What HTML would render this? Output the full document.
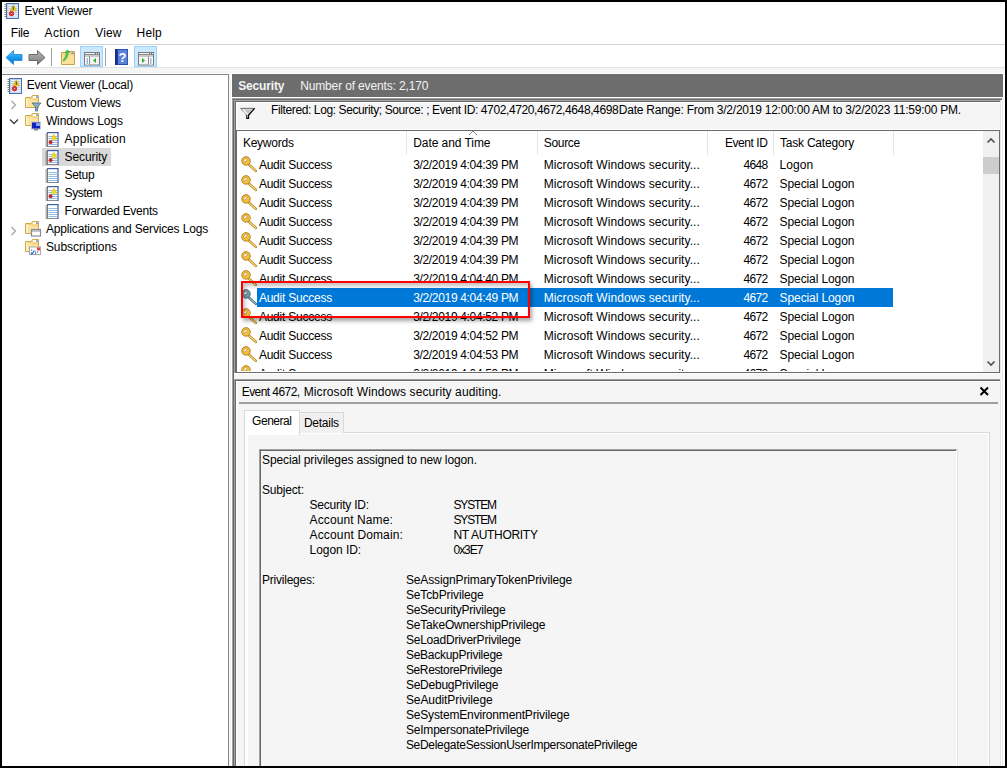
<!DOCTYPE html>
<html><head><meta charset="utf-8"><style>
html,body{margin:0;padding:0}
body{width:1007px;height:768px;overflow:hidden;position:relative;background:#fff;font-family:"Liberation Sans",sans-serif}
.a{position:absolute}
.t{position:absolute;font:12px/15px "Liberation Sans",sans-serif;white-space:pre;color:#000}
svg{position:absolute;overflow:visible}
</style></head><body>
<!-- menu / toolbar separators -->
<div class=a style="left:2px;top:44px;width:1003px;height:1px;background:#d4d4d4"></div>
<div class=a style="left:2px;top:67px;width:1003px;height:1px;background:#e1e4e1"></div>
<div class=a style="left:3px;top:68px;width:1002px;height:5px;background:#f5f5f5"></div>

<!-- toolbar buttons (hot) -->
<div class=a style="left:80px;top:46px;width:21px;height:19px;background:#cce8ff;border:1px solid #99d1ff"></div>
<div class=a style="left:134px;top:46px;width:21px;height:19px;background:#cce8ff;border:1px solid #99d1ff"></div>
<div class=a style="left:51px;top:48px;width:1px;height:18px;background:#a0a0a0"></div>
<div class=a style="left:105px;top:48px;width:1px;height:18px;background:#a0a0a0"></div>

<!-- tree pane -->
<div class=a style="left:2px;top:74px;width:226px;height:692px;border-top:1px solid #828790;border-right:1px solid #828790;background:#fff"></div>
<div class=a style="left:42px;top:148px;width:69px;height:18px;background:#d9d9d9"></div>

<!-- right bg areas -->
<div class=a style="left:229px;top:74px;width:2px;height:692px;background:#f5f5f5"></div>

<!-- header bar -->
<div class=a style="left:232px;top:74px;width:771px;height:23px;background:#6d6d6d"></div>

<!-- outer container sunken border -->
<div class=a style="left:232px;top:98px;width:771px;height:668px;background:#f5f5f5"></div>
<div class=a style="left:232px;top:98px;width:771px;height:1px;background:#a0a0a0"></div>
<div class=a style="left:232px;top:98px;width:1px;height:668px;background:#a0a0a0"></div>
<div class=a style="left:233px;top:99px;width:769px;height:1px;background:#696969"></div>
<div class=a style="left:233px;top:99px;width:1px;height:667px;background:#696969"></div>
<div class=a style="left:1002px;top:98px;width:1px;height:668px;background:#e9e9e9"></div>
<div class=a style="left:1003px;top:98px;width:2px;height:668px;background:#fff"></div>

<!-- upper panel -->
<div class=a style="left:234px;top:100px;width:767px;height:1px;background:#a8a8a8"></div>
<div class=a style="left:234px;top:100px;width:1px;height:273px;background:#a0a0a0"></div>
<div class=a style="left:235px;top:101px;width:765px;height:1px;background:#696969"></div>
<div class=a style="left:235px;top:101px;width:1px;height:272px;background:#696969"></div>
<div class=a style="left:1000px;top:100px;width:1px;height:273px;background:#e6e6e6"></div>
<div class=a style="left:1001px;top:100px;width:1px;height:273px;background:#fff"></div>
<!-- filter area -->
<div class=a style="left:236px;top:102px;width:764px;height:28px;background:#f5f5f5;border-top:1px solid #fff;border-left:1px solid #fff;box-sizing:border-box"></div>
<div class=a style="left:236px;top:129px;width:764px;height:1px;background:#fff"></div>
<!-- list control -->
<div class=a style="left:236px;top:130px;width:762px;height:241px;background:#fff;border:1px solid #6b6b6b"></div>
<!-- column dividers -->
<div class=a style="left:406px;top:131px;width:1px;height:24px;background:#e5e5e5"></div>
<div class=a style="left:537px;top:131px;width:1px;height:24px;background:#e5e5e5"></div>
<div class=a style="left:707px;top:131px;width:1px;height:24px;background:#e5e5e5"></div>
<div class=a style="left:773px;top:131px;width:1px;height:24px;background:#e5e5e5"></div>
<div class=a style="left:893px;top:131px;width:1px;height:24px;background:#e5e5e5"></div>
<!-- scrollbar -->
<div class=a style="left:983px;top:131px;width:16px;height:241px;background:#f0f0f0"></div>
<div class=a style="left:983px;top:157px;width:16px;height:17px;background:#cdcdcd"></div>
<!-- selected row -->
<div class=a style="left:257px;top:288px;width:636px;height:19px;background:#0078d7"></div>

<!-- splitter -->
<div class=a style="left:234px;top:373px;width:767px;height:6px;background:#f5f5f5"></div>
<div class=a style="left:234px;top:373px;width:767px;height:1px;background:#fff"></div>

<!-- lower panel -->
<div class=a style="left:234px;top:379px;width:767px;height:1px;background:#a0a0a0"></div>
<div class=a style="left:234px;top:379px;width:1px;height:387px;background:#a0a0a0"></div>
<div class=a style="left:235px;top:380px;width:765px;height:1px;background:#696969"></div>
<div class=a style="left:235px;top:380px;width:1px;height:386px;background:#696969"></div>
<div class=a style="left:236px;top:381px;width:764px;height:1px;background:#fff"></div>
<div class=a style="left:236px;top:381px;width:1px;height:385px;background:#fff"></div>
<div class=a style="left:1000px;top:379px;width:1px;height:387px;background:#e6e6e6"></div>
<div class=a style="left:1001px;top:379px;width:1px;height:387px;background:#fff"></div>
<!-- title separator -->
<div class=a style="left:239px;top:402px;width:759px;height:2px;background:#a0a0a0"></div>

<!-- tab page -->
<div class=a style="left:244px;top:432px;width:744px;height:340px;border:1px solid #d9d9d9;background:#fff"></div>
<div class=a style="left:248px;top:434px;width:740px;height:340px;background:#f5f5f5"></div>
<!-- tabs -->
<div class=a style="left:299px;top:412px;width:43px;height:20px;border:1px solid #d9d9d9;border-bottom:none;background:#f0f0f0"></div>
<div class=a style="left:244px;top:410px;width:54px;height:24px;border:1px solid #d9d9d9;border-bottom:none;background:#fff"></div>
<!-- text box -->
<div class=a style="left:259px;top:449px;width:698px;height:320px;background:#f5f5f5"></div>
<div class=a style="left:259px;top:449px;width:698px;height:1px;background:#a0a0a0"></div>
<div class=a style="left:259px;top:449px;width:1px;height:320px;background:#a0a0a0"></div>
<div class=a style="left:260px;top:450px;width:696px;height:1px;background:#696969"></div>
<div class=a style="left:260px;top:450px;width:1px;height:320px;background:#696969"></div>
<div class=a style="left:956px;top:450px;width:1px;height:320px;background:#fff"></div>
<div class=a style="left:957px;top:449px;width:1px;height:320px;background:#e3e3e3"></div>

<svg style="left:4px;top:3px" width="16" height="16" viewBox="0 0 16 16">
<rect x="2.5" y="0.5" width="12" height="15" fill="#bcd3ee" stroke="#4c6cb0"/>
<g stroke="#e8f2fc" stroke-width="1"><line x1="4" y1="2.5" x2="14" y2="2.5"/><line x1="4" y1="4.5" x2="14" y2="4.5"/><line x1="4" y1="6.5" x2="14" y2="6.5"/><line x1="4" y1="8.5" x2="14" y2="8.5"/><line x1="4" y1="10.5" x2="14" y2="10.5"/><line x1="4" y1="12.5" x2="14" y2="12.5"/><line x1="4" y1="14" x2="14" y2="14"/></g>
<g stroke="#707070" stroke-width="0.9"><line x1="0.5" y1="1.5" x2="3" y2="1.5"/><line x1="0.5" y1="3.5" x2="3" y2="3.5"/><line x1="0.5" y1="5.5" x2="3" y2="5.5"/><line x1="0.5" y1="7.5" x2="3" y2="7.5"/><line x1="0.5" y1="9.5" x2="3" y2="9.5"/><line x1="0.5" y1="11.5" x2="3" y2="11.5"/><line x1="0.5" y1="13.5" x2="3" y2="13.5"/></g>
<path d="M9.3 1.8 L12.6 7.8 L6 7.8 Z" fill="#f2d21a" stroke="#c9a400" stroke-width="0.6"/>
<line x1="9.3" y1="3.8" x2="9.3" y2="6.8" stroke="#222" stroke-width="0.9"/>
<circle cx="7.5" cy="10.6" r="2.6" fill="#d42a2a"/>
<path d="M6.8 9.9 L8.2 11.3 M8.2 9.9 L6.8 11.3" stroke="#fff" stroke-width="0.6"/>
</svg>
<svg style="left:7px;top:78px" width="16" height="16" viewBox="0 0 16 16">
<rect x="2.5" y="0.5" width="12" height="15" fill="#bcd3ee" stroke="#4c6cb0"/>
<g stroke="#e8f2fc" stroke-width="1"><line x1="4" y1="2.5" x2="14" y2="2.5"/><line x1="4" y1="4.5" x2="14" y2="4.5"/><line x1="4" y1="6.5" x2="14" y2="6.5"/><line x1="4" y1="8.5" x2="14" y2="8.5"/><line x1="4" y1="10.5" x2="14" y2="10.5"/><line x1="4" y1="12.5" x2="14" y2="12.5"/><line x1="4" y1="14" x2="14" y2="14"/></g>
<g stroke="#707070" stroke-width="0.9"><line x1="0.5" y1="1.5" x2="3" y2="1.5"/><line x1="0.5" y1="3.5" x2="3" y2="3.5"/><line x1="0.5" y1="5.5" x2="3" y2="5.5"/><line x1="0.5" y1="7.5" x2="3" y2="7.5"/><line x1="0.5" y1="9.5" x2="3" y2="9.5"/><line x1="0.5" y1="11.5" x2="3" y2="11.5"/><line x1="0.5" y1="13.5" x2="3" y2="13.5"/></g>
<path d="M9.3 1.8 L12.6 7.8 L6 7.8 Z" fill="#f2d21a" stroke="#c9a400" stroke-width="0.6"/>
<line x1="9.3" y1="3.8" x2="9.3" y2="6.8" stroke="#222" stroke-width="0.9"/>
<circle cx="7.5" cy="10.6" r="2.6" fill="#d42a2a"/>
<path d="M6.8 9.9 L8.2 11.3 M8.2 9.9 L6.8 11.3" stroke="#fff" stroke-width="0.6"/>
</svg>
<svg style="left:5px;top:49px" width="18" height="17" viewBox="0 0 18 17">
<defs><linearGradient id="gb" x1="0" y1="0" x2="0" y2="1"><stop offset="0" stop-color="#6cc8ff"/><stop offset="0.5" stop-color="#1a9af0"/><stop offset="1" stop-color="#0a6cc8"/></linearGradient></defs>
<path d="M1 8.5 L8.5 1.5 V5.5 H17 V11.5 H8.5 V15.5 Z" fill="url(#gb)" stroke="#2a88d8" stroke-width="0.9"/></svg>
<svg style="left:28px;top:49px" width="18" height="17" viewBox="0 0 18 17">
<defs><linearGradient id="gg" x1="0" y1="0" x2="0" y2="1"><stop offset="0" stop-color="#b8b8b8"/><stop offset="1" stop-color="#7a7a7a"/></linearGradient></defs>
<path d="M17 8.5 L9.5 1.5 V5.5 H1 V11.5 H9.5 V15.5 Z" fill="url(#gg)" stroke="#606060" stroke-width="0.9"/></svg>
<svg style="left:60px;top:49px" width="17" height="17" viewBox="0 0 17 17">
<path d="M1.5 3.5 H6 L7 2.5 H14.5 V15.5 H1.5 Z" fill="#f4d88a" stroke="#c9a24e"/>
<rect x="2" y="6.5" width="12" height="8.5" fill="#fbe29a"/>
<ellipse cx="12.5" cy="4.2" rx="1.4" ry="0.8" fill="#3a8ae0"/>
<path d="M3 11.5 C5 9 6 7 6.5 3 L5 3.5 L7.5 0.8 L9.5 3.8 L8 3.5 C8 7 7 9.5 4 12 Z" fill="#4cd24c" stroke="#2aa02a" stroke-width="0.6"/>
</svg>
<svg style="left:84px;top:52px" width="17" height="14" viewBox="0 0 17 14">
<rect x="0.5" y="0.5" width="15" height="12.5" fill="#f4f4f4" stroke="#7c7c7c"/>
<line x1="1" y1="2.5" x2="15" y2="2.5" stroke="#8a8a8a"/><rect x="11" y="1" width="1" height="1" fill="#666"/><rect x="13" y="1" width="1" height="1" fill="#666"/>
<line x1="1" y1="4" x2="15" y2="4" stroke="#a0a0a0"/>
<rect x="1.5" y="5" width="3.5" height="7.5" fill="#fff"/><g fill="#3a70c0"><rect x="2.5" y="6.5" width="1.5" height="1"/><rect x="2.5" y="8.5" width="1.5" height="1"/><rect x="2.5" y="10.5" width="1.5" height="1"/></g><line x1="5.5" y1="4.5" x2="5.5" y2="12.5" stroke="#8a8a8a"/><path d="M12 6 L9 8.5 L12 11 Z" fill="#2cb02c"/></svg>
<svg style="left:138px;top:52px" width="17" height="14" viewBox="0 0 17 14">
<rect x="0.5" y="0.5" width="15" height="12.5" fill="#f4f4f4" stroke="#7c7c7c"/>
<line x1="1" y1="2.5" x2="15" y2="2.5" stroke="#8a8a8a"/><rect x="11" y="1" width="1" height="1" fill="#666"/><rect x="13" y="1" width="1" height="1" fill="#666"/>
<line x1="1" y1="4" x2="15" y2="4" stroke="#a0a0a0"/>
<rect x="11" y="5" width="3.5" height="7.5" fill="#fff"/><g fill="#3a70c0"><rect x="12" y="6.5" width="1.5" height="1"/><rect x="12" y="8.5" width="1.5" height="1"/><rect x="12" y="10.5" width="1.5" height="1"/></g><line x1="10.5" y1="4.5" x2="10.5" y2="12.5" stroke="#8a8a8a"/><path d="M4 6 L7 8.5 L4 11 Z" fill="#2cb02c"/></svg>
<svg style="left:115px;top:49px" width="14" height="16" viewBox="0 0 14 16">
<rect x="0" y="0" width="13" height="16" fill="#2446a8"/><rect x="3" y="0.8" width="9.3" height="14.4" fill="#5a82d8"/>
<rect x="0" y="0" width="2.5" height="16" fill="#1a2e88"/>
<text x="7.6" y="12.8" font-family="Liberation Sans" font-weight="bold" font-size="13" fill="#fff" text-anchor="middle">?</text></svg>
<svg style="left:10px;top:100px" width="8" height="10" viewBox="0 0 8 10"><path d="M1.5 1 L5.5 5 L1.5 9" fill="none" stroke="#a6a6a6" stroke-width="1.3"/></svg>
<svg style="left:9px;top:118px" width="10" height="8" viewBox="0 0 10 8"><path d="M1 1.5 L5 5.5 L9 1.5" fill="none" stroke="#404040" stroke-width="1.4"/></svg>
<svg style="left:10px;top:226px" width="8" height="10" viewBox="0 0 8 10"><path d="M1.5 1 L5.5 5 L1.5 9" fill="none" stroke="#a6a6a6" stroke-width="1.3"/></svg>
<svg style="left:25px;top:95px" width="18" height="18" viewBox="0 0 18 18">
<path d="M0.5 2.5 H6 L7.5 0.5 H13.5 V12.5 H0.5 Z" fill="#f3d27e" stroke="#d0a850"/>
<rect x="8" y="1.2" width="5" height="2" fill="#fff"/><rect x="11" y="1.4" width="2" height="1.5" fill="#5aa0e0"/>
<path d="M1.5 4 H7 L8 5.5 H13 V12 H1.5 Z" fill="#fbe3a0"/>
<rect x="1" y="3" width="1.6" height="9" fill="#fff2c4"/>
<path d="M7 8 H16 L12.5 12 V16 H10.5 V12 Z" fill="#8ab0c8" stroke="#4a6878" stroke-width="0.8"/>
</svg>
<svg style="left:25px;top:113px" width="18" height="18" viewBox="0 0 18 18">
<path d="M0.5 2.5 H6 L7.5 0.5 H13.5 V12.5 H0.5 Z" fill="#f3d27e" stroke="#d0a850"/>
<rect x="8" y="1.2" width="5" height="2" fill="#fff"/><rect x="11" y="1.4" width="2" height="1.5" fill="#5aa0e0"/>
<path d="M1.5 4 H7 L8 5.5 H13 V12 H1.5 Z" fill="#fbe3a0"/>
<rect x="1" y="3" width="1.6" height="9" fill="#fff2c4"/>
<rect x="6.5" y="9" width="9" height="7" fill="#1020c0" stroke="#c8c8c8"/><rect x="11" y="10" width="4" height="3" fill="#7aa8f0"/><rect x="9" y="16" width="4" height="1.5" fill="#888"/>
</svg>
<svg style="left:25px;top:221px" width="18" height="18" viewBox="0 0 18 18">
<path d="M0.5 2.5 H6 L7.5 0.5 H13.5 V12.5 H0.5 Z" fill="#f3d27e" stroke="#d0a850"/>
<rect x="8" y="1.2" width="5" height="2" fill="#fff"/><rect x="11" y="1.4" width="2" height="1.5" fill="#5aa0e0"/>
<path d="M1.5 4 H7 L8 5.5 H13 V12 H1.5 Z" fill="#fbe3a0"/>
<rect x="1" y="3" width="1.6" height="9" fill="#fff2c4"/>
<rect x="6.5" y="8.5" width="9" height="6.5" fill="#fff" stroke="#8a8e94" stroke-width="1.2"/><line x1="6.5" y1="10" x2="15.5" y2="10" stroke="#8a8e94" stroke-width="1"/>
</svg>
<svg style="left:25px;top:239px" width="18" height="18" viewBox="0 0 18 18">
<path d="M0.5 2.5 H6 L7.5 0.5 H13.5 V12.5 H0.5 Z" fill="#f3d27e" stroke="#d0a850"/>
<rect x="8" y="1.2" width="5" height="2" fill="#fff"/><rect x="11" y="1.4" width="2" height="1.5" fill="#5aa0e0"/>
<path d="M1.5 4 H7 L8 5.5 H13 V12 H1.5 Z" fill="#fbe3a0"/>
<rect x="1" y="3" width="1.6" height="9" fill="#fff2c4"/>
<rect x="4.5" y="8" width="11" height="7.5" fill="#fff" stroke="#a8a8a8"/><rect x="12" y="8.5" width="3" height="3" fill="#f04040"/><g fill="#3a7ac0"><rect x="6" y="10.5" width="1.2" height="1.2"/><rect x="10" y="12.5" width="1.2" height="1.2"/><rect x="12" y="12.5" width="1.2" height="1.2"/><rect x="10" y="14" width="1.2" height="1"/></g><path d="M6 13.5 L7 15 L9.5 11.5" stroke="#2050b0" stroke-width="1.1" fill="none"/>
</svg>
<svg style="left:44px;top:132px" width="16" height="16" viewBox="0 0 16 16">
<rect x="3" y="0.5" width="11" height="14" fill="#fff"/>
<line x1="3" y1="14.5" x2="14" y2="14.5" stroke="#8a8a8a" stroke-width="1"/>
<line x1="3.5" y1="0.5" x2="3.5" y2="14.5" stroke="#9a9a9a" stroke-width="1"/>
<line x1="3" y1="0.6" x2="14.6" y2="0.6" stroke="#3e5ea8" stroke-width="1.2"/>
<line x1="14" y1="0.5" x2="14" y2="15" stroke="#3e5ea8" stroke-width="1.2"/>
<g stroke="#8fbce0" stroke-width="1"><line x1="4.5" y1="4.5" x2="13" y2="4.5"/><line x1="4.5" y1="6.5" x2="13" y2="6.5"/><line x1="4.5" y1="8.5" x2="13" y2="8.5"/><line x1="4.5" y1="10.5" x2="13" y2="10.5"/><line x1="4.5" y1="12.5" x2="13" y2="12.5"/></g>
<g stroke="#555" stroke-width="0.9"><line x1="1.5" y1="2" x2="4" y2="2"/><line x1="1.5" y1="4" x2="4" y2="4"/><line x1="1.5" y1="6" x2="4" y2="6"/><line x1="1.5" y1="8" x2="4" y2="8"/><line x1="1.5" y1="10" x2="4" y2="10"/><line x1="1.5" y1="12" x2="4" y2="12"/><line x1="1.5" y1="14" x2="4" y2="14"/></g>
<path d="M10 2.2 L12.8 7.3 L7.2 7.3 Z" fill="#f4dc10" stroke="#d6b800" stroke-width="0.5"/>
<circle cx="6.6" cy="10.2" r="1.9" fill="#d02020"/>
</svg>
<svg style="left:44px;top:150px" width="16" height="16" viewBox="0 0 16 16">
<rect x="3" y="0.5" width="11" height="14" fill="#fff"/>
<line x1="3" y1="14.5" x2="14" y2="14.5" stroke="#8a8a8a" stroke-width="1"/>
<line x1="3.5" y1="0.5" x2="3.5" y2="14.5" stroke="#9a9a9a" stroke-width="1"/>
<line x1="3" y1="0.6" x2="14.6" y2="0.6" stroke="#3e5ea8" stroke-width="1.2"/>
<line x1="14" y1="0.5" x2="14" y2="15" stroke="#3e5ea8" stroke-width="1.2"/>
<g stroke="#8fbce0" stroke-width="1"><line x1="4.5" y1="4.5" x2="13" y2="4.5"/><line x1="4.5" y1="6.5" x2="13" y2="6.5"/><line x1="4.5" y1="8.5" x2="13" y2="8.5"/><line x1="4.5" y1="10.5" x2="13" y2="10.5"/><line x1="4.5" y1="12.5" x2="13" y2="12.5"/></g>
<g stroke="#555" stroke-width="0.9"><line x1="1.5" y1="2" x2="4" y2="2"/><line x1="1.5" y1="4" x2="4" y2="4"/><line x1="1.5" y1="6" x2="4" y2="6"/><line x1="1.5" y1="8" x2="4" y2="8"/><line x1="1.5" y1="10" x2="4" y2="10"/><line x1="1.5" y1="12" x2="4" y2="12"/><line x1="1.5" y1="14" x2="4" y2="14"/></g>
<path d="M10 2.2 L12.8 7.3 L7.2 7.3 Z" fill="#f4dc10" stroke="#d6b800" stroke-width="0.5"/>
<circle cx="6.6" cy="10.2" r="1.9" fill="#d02020"/>
</svg>
<svg style="left:44px;top:168px" width="16" height="16" viewBox="0 0 16 16">
<rect x="3" y="0.5" width="11" height="14" fill="#fff"/>
<line x1="3" y1="14.5" x2="14" y2="14.5" stroke="#8a8a8a" stroke-width="1"/>
<line x1="3.5" y1="0.5" x2="3.5" y2="14.5" stroke="#9a9a9a" stroke-width="1"/>
<line x1="3" y1="0.6" x2="14.6" y2="0.6" stroke="#3e5ea8" stroke-width="1.2"/>
<line x1="14" y1="0.5" x2="14" y2="15" stroke="#3e5ea8" stroke-width="1.2"/>
<g stroke="#8fbce0" stroke-width="1"><line x1="4.5" y1="4.5" x2="13" y2="4.5"/><line x1="4.5" y1="6.5" x2="13" y2="6.5"/><line x1="4.5" y1="8.5" x2="13" y2="8.5"/><line x1="4.5" y1="10.5" x2="13" y2="10.5"/><line x1="4.5" y1="12.5" x2="13" y2="12.5"/></g>
<g stroke="#555" stroke-width="0.9"><line x1="1.5" y1="2" x2="4" y2="2"/><line x1="1.5" y1="4" x2="4" y2="4"/><line x1="1.5" y1="6" x2="4" y2="6"/><line x1="1.5" y1="8" x2="4" y2="8"/><line x1="1.5" y1="10" x2="4" y2="10"/><line x1="1.5" y1="12" x2="4" y2="12"/><line x1="1.5" y1="14" x2="4" y2="14"/></g>

</svg>
<svg style="left:44px;top:186px" width="16" height="16" viewBox="0 0 16 16">
<rect x="3" y="0.5" width="11" height="14" fill="#fff"/>
<line x1="3" y1="14.5" x2="14" y2="14.5" stroke="#8a8a8a" stroke-width="1"/>
<line x1="3.5" y1="0.5" x2="3.5" y2="14.5" stroke="#9a9a9a" stroke-width="1"/>
<line x1="3" y1="0.6" x2="14.6" y2="0.6" stroke="#3e5ea8" stroke-width="1.2"/>
<line x1="14" y1="0.5" x2="14" y2="15" stroke="#3e5ea8" stroke-width="1.2"/>
<g stroke="#8fbce0" stroke-width="1"><line x1="4.5" y1="4.5" x2="13" y2="4.5"/><line x1="4.5" y1="6.5" x2="13" y2="6.5"/><line x1="4.5" y1="8.5" x2="13" y2="8.5"/><line x1="4.5" y1="10.5" x2="13" y2="10.5"/><line x1="4.5" y1="12.5" x2="13" y2="12.5"/></g>
<g stroke="#555" stroke-width="0.9"><line x1="1.5" y1="2" x2="4" y2="2"/><line x1="1.5" y1="4" x2="4" y2="4"/><line x1="1.5" y1="6" x2="4" y2="6"/><line x1="1.5" y1="8" x2="4" y2="8"/><line x1="1.5" y1="10" x2="4" y2="10"/><line x1="1.5" y1="12" x2="4" y2="12"/><line x1="1.5" y1="14" x2="4" y2="14"/></g>
<path d="M10 2.2 L12.8 7.3 L7.2 7.3 Z" fill="#f4dc10" stroke="#d6b800" stroke-width="0.5"/>
<circle cx="6.6" cy="10.2" r="1.9" fill="#d02020"/>
</svg>
<svg style="left:44px;top:204px" width="16" height="16" viewBox="0 0 16 16">
<rect x="3" y="0.5" width="11" height="14" fill="#fff"/>
<line x1="3" y1="14.5" x2="14" y2="14.5" stroke="#8a8a8a" stroke-width="1"/>
<line x1="3.5" y1="0.5" x2="3.5" y2="14.5" stroke="#9a9a9a" stroke-width="1"/>
<line x1="3" y1="0.6" x2="14.6" y2="0.6" stroke="#3e5ea8" stroke-width="1.2"/>
<line x1="14" y1="0.5" x2="14" y2="15" stroke="#3e5ea8" stroke-width="1.2"/>
<g stroke="#8fbce0" stroke-width="1"><line x1="4.5" y1="4.5" x2="13" y2="4.5"/><line x1="4.5" y1="6.5" x2="13" y2="6.5"/><line x1="4.5" y1="8.5" x2="13" y2="8.5"/><line x1="4.5" y1="10.5" x2="13" y2="10.5"/><line x1="4.5" y1="12.5" x2="13" y2="12.5"/></g>
<g stroke="#555" stroke-width="0.9"><line x1="1.5" y1="2" x2="4" y2="2"/><line x1="1.5" y1="4" x2="4" y2="4"/><line x1="1.5" y1="6" x2="4" y2="6"/><line x1="1.5" y1="8" x2="4" y2="8"/><line x1="1.5" y1="10" x2="4" y2="10"/><line x1="1.5" y1="12" x2="4" y2="12"/><line x1="1.5" y1="14" x2="4" y2="14"/></g>

</svg>
<svg style="left:239px;top:107px" width="17" height="13" viewBox="0 0 17 13">
<path d="M5.5 2.8 H12.8 L9 7 Z" fill="#c4c4c4"/>
<line x1="1.5" y1="1.5" x2="15.5" y2="1.5" stroke="#7a7a7a" stroke-width="1.3"/>
<line x1="1.8" y1="1.8" x2="7.8" y2="8.2" stroke="#555" stroke-width="0.9" stroke-dasharray="1.1 0.7"/>
<line x1="15.6" y1="1.4" x2="9.4" y2="8.2" stroke="#000" stroke-width="1.3"/>
<path d="M7.8 8 V11.4 H9.6 V8" fill="none" stroke="#000" stroke-width="1.1"/>
</svg>
<div class=a style="left:0;top:0;width:1007px;height:768px;clip-path:inset(131px 24px 397px 237px)">
<svg style="left:241px;top:156px" width="17" height="17" viewBox="0 0 17 17">
<line x1="7.5" y1="8.3" x2="14.8" y2="14.9" stroke="#b07e28" stroke-width="2.5" stroke-linecap="round"/>
<line x1="7.5" y1="8.3" x2="14.8" y2="14.9" stroke="#fde06a" stroke-width="1.1" stroke-linecap="round"/>
<circle cx="5" cy="4.9" r="4.3" fill="#f2bf3c" stroke="#b07e28" stroke-width="0.9"/>
<ellipse cx="4.4" cy="4.2" rx="2.1" ry="1.2" transform="rotate(-45 4.4 4.2)" fill="#fff" stroke="#b07e28" stroke-width="0.6"/>
</svg>
<svg style="left:241px;top:175px" width="17" height="17" viewBox="0 0 17 17">
<line x1="7.5" y1="8.3" x2="14.8" y2="14.9" stroke="#b07e28" stroke-width="2.5" stroke-linecap="round"/>
<line x1="7.5" y1="8.3" x2="14.8" y2="14.9" stroke="#fde06a" stroke-width="1.1" stroke-linecap="round"/>
<circle cx="5" cy="4.9" r="4.3" fill="#f2bf3c" stroke="#b07e28" stroke-width="0.9"/>
<ellipse cx="4.4" cy="4.2" rx="2.1" ry="1.2" transform="rotate(-45 4.4 4.2)" fill="#fff" stroke="#b07e28" stroke-width="0.6"/>
</svg>
<svg style="left:241px;top:194px" width="17" height="17" viewBox="0 0 17 17">
<line x1="7.5" y1="8.3" x2="14.8" y2="14.9" stroke="#b07e28" stroke-width="2.5" stroke-linecap="round"/>
<line x1="7.5" y1="8.3" x2="14.8" y2="14.9" stroke="#fde06a" stroke-width="1.1" stroke-linecap="round"/>
<circle cx="5" cy="4.9" r="4.3" fill="#f2bf3c" stroke="#b07e28" stroke-width="0.9"/>
<ellipse cx="4.4" cy="4.2" rx="2.1" ry="1.2" transform="rotate(-45 4.4 4.2)" fill="#fff" stroke="#b07e28" stroke-width="0.6"/>
</svg>
<svg style="left:241px;top:213px" width="17" height="17" viewBox="0 0 17 17">
<line x1="7.5" y1="8.3" x2="14.8" y2="14.9" stroke="#b07e28" stroke-width="2.5" stroke-linecap="round"/>
<line x1="7.5" y1="8.3" x2="14.8" y2="14.9" stroke="#fde06a" stroke-width="1.1" stroke-linecap="round"/>
<circle cx="5" cy="4.9" r="4.3" fill="#f2bf3c" stroke="#b07e28" stroke-width="0.9"/>
<ellipse cx="4.4" cy="4.2" rx="2.1" ry="1.2" transform="rotate(-45 4.4 4.2)" fill="#fff" stroke="#b07e28" stroke-width="0.6"/>
</svg>
<svg style="left:241px;top:232px" width="17" height="17" viewBox="0 0 17 17">
<line x1="7.5" y1="8.3" x2="14.8" y2="14.9" stroke="#b07e28" stroke-width="2.5" stroke-linecap="round"/>
<line x1="7.5" y1="8.3" x2="14.8" y2="14.9" stroke="#fde06a" stroke-width="1.1" stroke-linecap="round"/>
<circle cx="5" cy="4.9" r="4.3" fill="#f2bf3c" stroke="#b07e28" stroke-width="0.9"/>
<ellipse cx="4.4" cy="4.2" rx="2.1" ry="1.2" transform="rotate(-45 4.4 4.2)" fill="#fff" stroke="#b07e28" stroke-width="0.6"/>
</svg>
<svg style="left:241px;top:251px" width="17" height="17" viewBox="0 0 17 17">
<line x1="7.5" y1="8.3" x2="14.8" y2="14.9" stroke="#b07e28" stroke-width="2.5" stroke-linecap="round"/>
<line x1="7.5" y1="8.3" x2="14.8" y2="14.9" stroke="#fde06a" stroke-width="1.1" stroke-linecap="round"/>
<circle cx="5" cy="4.9" r="4.3" fill="#f2bf3c" stroke="#b07e28" stroke-width="0.9"/>
<ellipse cx="4.4" cy="4.2" rx="2.1" ry="1.2" transform="rotate(-45 4.4 4.2)" fill="#fff" stroke="#b07e28" stroke-width="0.6"/>
</svg>
<svg style="left:241px;top:270px" width="17" height="17" viewBox="0 0 17 17">
<line x1="7.5" y1="8.3" x2="14.8" y2="14.9" stroke="#b07e28" stroke-width="2.5" stroke-linecap="round"/>
<line x1="7.5" y1="8.3" x2="14.8" y2="14.9" stroke="#fde06a" stroke-width="1.1" stroke-linecap="round"/>
<circle cx="5" cy="4.9" r="4.3" fill="#f2bf3c" stroke="#b07e28" stroke-width="0.9"/>
<ellipse cx="4.4" cy="4.2" rx="2.1" ry="1.2" transform="rotate(-45 4.4 4.2)" fill="#fff" stroke="#b07e28" stroke-width="0.6"/>
</svg>
<svg style="left:241px;top:289px" width="17" height="17" viewBox="0 0 17 17">
<line x1="7.5" y1="8.3" x2="14.8" y2="14.9" stroke="#4a6e76" stroke-width="2.5" stroke-linecap="round"/>
<line x1="7.5" y1="8.3" x2="14.8" y2="14.9" stroke="#8fb8c0" stroke-width="1.1" stroke-linecap="round"/>
<circle cx="5" cy="4.9" r="4.3" fill="#6e9ca6" stroke="#4a6e76" stroke-width="0.9"/>
<ellipse cx="4.4" cy="4.2" rx="2.1" ry="1.2" transform="rotate(-45 4.4 4.2)" fill="#f0f6f6" stroke="#4a6e76" stroke-width="0.6"/>
</svg>
<svg style="left:241px;top:308px" width="17" height="17" viewBox="0 0 17 17">
<line x1="7.5" y1="8.3" x2="14.8" y2="14.9" stroke="#b07e28" stroke-width="2.5" stroke-linecap="round"/>
<line x1="7.5" y1="8.3" x2="14.8" y2="14.9" stroke="#fde06a" stroke-width="1.1" stroke-linecap="round"/>
<circle cx="5" cy="4.9" r="4.3" fill="#f2bf3c" stroke="#b07e28" stroke-width="0.9"/>
<ellipse cx="4.4" cy="4.2" rx="2.1" ry="1.2" transform="rotate(-45 4.4 4.2)" fill="#fff" stroke="#b07e28" stroke-width="0.6"/>
</svg>
<svg style="left:241px;top:327px" width="17" height="17" viewBox="0 0 17 17">
<line x1="7.5" y1="8.3" x2="14.8" y2="14.9" stroke="#b07e28" stroke-width="2.5" stroke-linecap="round"/>
<line x1="7.5" y1="8.3" x2="14.8" y2="14.9" stroke="#fde06a" stroke-width="1.1" stroke-linecap="round"/>
<circle cx="5" cy="4.9" r="4.3" fill="#f2bf3c" stroke="#b07e28" stroke-width="0.9"/>
<ellipse cx="4.4" cy="4.2" rx="2.1" ry="1.2" transform="rotate(-45 4.4 4.2)" fill="#fff" stroke="#b07e28" stroke-width="0.6"/>
</svg>
<svg style="left:241px;top:346px" width="17" height="17" viewBox="0 0 17 17">
<line x1="7.5" y1="8.3" x2="14.8" y2="14.9" stroke="#b07e28" stroke-width="2.5" stroke-linecap="round"/>
<line x1="7.5" y1="8.3" x2="14.8" y2="14.9" stroke="#fde06a" stroke-width="1.1" stroke-linecap="round"/>
<circle cx="5" cy="4.9" r="4.3" fill="#f2bf3c" stroke="#b07e28" stroke-width="0.9"/>
<ellipse cx="4.4" cy="4.2" rx="2.1" ry="1.2" transform="rotate(-45 4.4 4.2)" fill="#fff" stroke="#b07e28" stroke-width="0.6"/>
</svg>
<svg style="left:241px;top:365px" width="17" height="17" viewBox="0 0 17 17">
<line x1="7.5" y1="8.3" x2="14.8" y2="14.9" stroke="#b07e28" stroke-width="2.5" stroke-linecap="round"/>
<line x1="7.5" y1="8.3" x2="14.8" y2="14.9" stroke="#fde06a" stroke-width="1.1" stroke-linecap="round"/>
<circle cx="5" cy="4.9" r="4.3" fill="#f2bf3c" stroke="#b07e28" stroke-width="0.9"/>
<ellipse cx="4.4" cy="4.2" rx="2.1" ry="1.2" transform="rotate(-45 4.4 4.2)" fill="#fff" stroke="#b07e28" stroke-width="0.6"/>
</svg>
</div>
<svg style="left:468px;top:130px" width="10" height="6" viewBox="0 0 10 6"><path d="M1 5 L5 1 L9 5" fill="none" stroke="#8a8a8a" stroke-width="1"/></svg>
<svg style="left:986px;top:136px" width="10" height="8" viewBox="0 0 10 8"><path d="M1.5 6.5 L5 3 L8.5 6.5" fill="none" stroke="#505050" stroke-width="1.6"/></svg>
<svg style="left:986px;top:360px" width="10" height="8" viewBox="0 0 10 8"><path d="M1.5 1.5 L5 5 L8.5 1.5" fill="none" stroke="#505050" stroke-width="1.6"/></svg>
<svg style="left:979px;top:386px" width="11" height="11" viewBox="0 0 11 11"><path d="M1.5 1.5 L9 9 M9 1.5 L1.5 9" stroke="#000" stroke-width="2"/></svg>
<div class=t style="left:24.40px;top:4px;letter-spacing:-0.226px;">Event Viewer</div>
<div class=t style="left:10.80px;top:26px;letter-spacing:-0.248px;">File</div>
<div class=t style="left:44.60px;top:26px;letter-spacing:0.368px;">Action</div>
<div class=t style="left:95.30px;top:26px;letter-spacing:0.101px;">View</div>
<div class=t style="left:136.60px;top:26px;letter-spacing:0.138px;">Help</div>
<div class=t style="left:26.80px;top:78px;letter-spacing:-0.216px;">Event Viewer (Local)</div>
<div class=t style="left:45.90px;top:96px;letter-spacing:-0.117px;">Custom Views</div>
<div class=t style="left:45.90px;top:114px;letter-spacing:-0.095px;">Windows Logs</div>
<div class=t style="left:64.60px;top:132px;letter-spacing:0.228px;">Application</div>
<div class=t style="left:64.60px;top:150px;letter-spacing:-0.094px;">Security</div>
<div class=t style="left:64.60px;top:168px;letter-spacing:-0.340px;">Setup</div>
<div class=t style="left:64.60px;top:186px;letter-spacing:-0.403px;">System</div>
<div class=t style="left:64.60px;top:204px;letter-spacing:-0.266px;">Forwarded Events</div>
<div class=t style="left:45.90px;top:222px;letter-spacing:-0.154px;">Applications and Services Logs</div>
<div class=t style="left:45.90px;top:240px;letter-spacing:-0.071px;">Subscriptions</div>
<div class=t style="left:238.20px;top:79px;letter-spacing:-0.151px;font-weight:bold;color:#f4f4f4;">Security</div>
<div class=t style="left:300.20px;top:79px;letter-spacing:-0.146px;color:#f4f4f4;">Number of events: 2,170</div>
<div class=t style="left:271.10px;top:103px;letter-spacing:-0.393px;">Filtered: Log: Security; Source: ; Event ID: 4702,4720,4672,4648,4698</div>
<div class=t style="left:618.80px;top:103px;letter-spacing:-0.236px;">Date Range: From 3/2/2019 12:00:00 AM to 3/2/2023 11:59:00 PM.</div>
<div class=t style="left:242.90px;top:136px;letter-spacing:-0.241px;">Keywords</div>
<div class=t style="left:413.20px;top:136px;letter-spacing:-0.062px;">Date and Time</div>
<div class=t style="left:543.80px;top:136px;letter-spacing:-0.326px;">Source</div>
<div class=t style="right:239.53px;top:136px;letter-spacing:-0.433px;">Event ID</div>
<div class=t style="left:779.90px;top:136px;letter-spacing:-0.200px;">Task Category</div>
<div class=a style="left:0;top:0;width:1007px;height:768px;clip-path:inset(131px 24px 397px 237px)">
<div class=t style="left:258.90px;top:158px;letter-spacing:-0.229px;">Audit Success</div>
<div class=t style="left:413.20px;top:158px;letter-spacing:-0.335px;">3/2/2019 4:04:39 PM</div>
<div class=t style="left:543.80px;top:158px;letter-spacing:0.054px;">Microsoft Windows security...</div>
<div class=t style="right:239.63px;top:158px;letter-spacing:-0.734px;">4648</div>
<div class=t style="left:779.60px;top:158px;letter-spacing:0.056px;">Logon</div>
<div class=t style="left:258.90px;top:177px;letter-spacing:-0.229px;">Audit Success</div>
<div class=t style="left:413.20px;top:177px;letter-spacing:-0.335px;">3/2/2019 4:04:39 PM</div>
<div class=t style="left:543.80px;top:177px;letter-spacing:0.054px;">Microsoft Windows security...</div>
<div class=t style="right:239.63px;top:177px;letter-spacing:-0.734px;">4672</div>
<div class=t style="left:779.60px;top:177px;letter-spacing:-0.105px;">Special Logon</div>
<div class=t style="left:258.90px;top:196px;letter-spacing:-0.229px;">Audit Success</div>
<div class=t style="left:413.20px;top:196px;letter-spacing:-0.335px;">3/2/2019 4:04:39 PM</div>
<div class=t style="left:543.80px;top:196px;letter-spacing:0.054px;">Microsoft Windows security...</div>
<div class=t style="right:239.63px;top:196px;letter-spacing:-0.734px;">4672</div>
<div class=t style="left:779.60px;top:196px;letter-spacing:-0.105px;">Special Logon</div>
<div class=t style="left:258.90px;top:215px;letter-spacing:-0.229px;">Audit Success</div>
<div class=t style="left:413.20px;top:215px;letter-spacing:-0.335px;">3/2/2019 4:04:39 PM</div>
<div class=t style="left:543.80px;top:215px;letter-spacing:0.054px;">Microsoft Windows security...</div>
<div class=t style="right:239.63px;top:215px;letter-spacing:-0.734px;">4672</div>
<div class=t style="left:779.60px;top:215px;letter-spacing:-0.105px;">Special Logon</div>
<div class=t style="left:258.90px;top:234px;letter-spacing:-0.229px;">Audit Success</div>
<div class=t style="left:413.20px;top:234px;letter-spacing:-0.335px;">3/2/2019 4:04:39 PM</div>
<div class=t style="left:543.80px;top:234px;letter-spacing:0.054px;">Microsoft Windows security...</div>
<div class=t style="right:239.63px;top:234px;letter-spacing:-0.734px;">4672</div>
<div class=t style="left:779.60px;top:234px;letter-spacing:-0.105px;">Special Logon</div>
<div class=t style="left:258.90px;top:253px;letter-spacing:-0.229px;">Audit Success</div>
<div class=t style="left:413.20px;top:253px;letter-spacing:-0.335px;">3/2/2019 4:04:39 PM</div>
<div class=t style="left:543.80px;top:253px;letter-spacing:0.054px;">Microsoft Windows security...</div>
<div class=t style="right:239.63px;top:253px;letter-spacing:-0.734px;">4672</div>
<div class=t style="left:779.60px;top:253px;letter-spacing:-0.105px;">Special Logon</div>
<div class=t style="left:258.90px;top:272px;letter-spacing:-0.229px;">Audit Success</div>
<div class=t style="left:413.20px;top:272px;letter-spacing:-0.335px;">3/2/2019 4:04:40 PM</div>
<div class=t style="left:543.80px;top:272px;letter-spacing:0.054px;">Microsoft Windows security...</div>
<div class=t style="right:239.63px;top:272px;letter-spacing:-0.734px;">4672</div>
<div class=t style="left:779.60px;top:272px;letter-spacing:-0.105px;">Special Logon</div>
<div class=t style="left:258.90px;top:291px;letter-spacing:-0.229px;color:#fff;">Audit Success</div>
<div class=t style="left:413.20px;top:291px;letter-spacing:-0.335px;color:#fff;">3/2/2019 4:04:49 PM</div>
<div class=t style="left:543.80px;top:291px;letter-spacing:0.054px;color:#fff;">Microsoft Windows security...</div>
<div class=t style="right:239.63px;top:291px;letter-spacing:-0.734px;color:#fff;">4672</div>
<div class=t style="left:779.60px;top:291px;letter-spacing:-0.105px;color:#fff;">Special Logon</div>
<div class=t style="left:258.90px;top:310px;letter-spacing:-0.229px;">Audit Success</div>
<div class=t style="left:413.20px;top:310px;letter-spacing:-0.335px;">3/2/2019 4:04:52 PM</div>
<div class=t style="left:543.80px;top:310px;letter-spacing:0.054px;">Microsoft Windows security...</div>
<div class=t style="right:239.63px;top:310px;letter-spacing:-0.734px;">4672</div>
<div class=t style="left:779.60px;top:310px;letter-spacing:-0.105px;">Special Logon</div>
<div class=t style="left:258.90px;top:329px;letter-spacing:-0.229px;">Audit Success</div>
<div class=t style="left:413.20px;top:329px;letter-spacing:-0.335px;">3/2/2019 4:04:52 PM</div>
<div class=t style="left:543.80px;top:329px;letter-spacing:0.054px;">Microsoft Windows security...</div>
<div class=t style="right:239.63px;top:329px;letter-spacing:-0.734px;">4672</div>
<div class=t style="left:779.60px;top:329px;letter-spacing:-0.105px;">Special Logon</div>
<div class=t style="left:258.90px;top:348px;letter-spacing:-0.229px;">Audit Success</div>
<div class=t style="left:413.20px;top:348px;letter-spacing:-0.335px;">3/2/2019 4:04:53 PM</div>
<div class=t style="left:543.80px;top:348px;letter-spacing:0.054px;">Microsoft Windows security...</div>
<div class=t style="right:239.63px;top:348px;letter-spacing:-0.734px;">4672</div>
<div class=t style="left:779.60px;top:348px;letter-spacing:-0.105px;">Special Logon</div>
<div class=t style="left:258.90px;top:367px;letter-spacing:-0.229px;">Audit Success</div>
<div class=t style="left:413.20px;top:367px;letter-spacing:-0.335px;">3/2/2019 4:04:53 PM</div>
<div class=t style="left:543.80px;top:367px;letter-spacing:0.054px;">Microsoft Windows security...</div>
<div class=t style="right:239.63px;top:367px;letter-spacing:-0.734px;">4672</div>
<div class=t style="left:779.60px;top:367px;letter-spacing:-0.105px;">Special Logon</div>
</div>
<div class=t style="left:241.70px;top:385px;letter-spacing:-0.556px;">Event 4672,</div>
<div class=t style="left:303.70px;top:385px;letter-spacing:0.101px;">Microsoft Windows security auditing.</div>
<div class=t style="left:252.10px;top:414px;letter-spacing:-0.467px;">General</div>
<div class=t style="left:303.90px;top:416px;letter-spacing:-0.248px;">Details</div>
<div class=t style="left:262.00px;top:453px;letter-spacing:-0.112px;">Special privileges assigned to new logon.</div>
<div class=t style="left:262.00px;top:483px;letter-spacing:-0.194px;">Subject:</div>
<div class=t style="left:309.60px;top:498px;letter-spacing:-0.238px;">Security ID:</div>
<div class=t style="left:453.50px;top:498px;letter-spacing:-1.149px;">SYSTEM</div>
<div class=t style="left:309.60px;top:513px;letter-spacing:0.096px;">Account Name:</div>
<div class=t style="left:453.50px;top:513px;letter-spacing:-1.149px;">SYSTEM</div>
<div class=t style="left:309.60px;top:528px;letter-spacing:0.136px;">Account Domain:</div>
<div class=t style="left:453.50px;top:528px;letter-spacing:-0.309px;">NT AUTHORITY</div>
<div class=t style="left:309.60px;top:543px;letter-spacing:-0.056px;">Logon ID:</div>
<div class=t style="left:453.50px;top:543px;letter-spacing:-1.033px;">0x3E7</div>
<div class=t style="left:262.00px;top:573px;letter-spacing:-0.226px;">Privileges:</div>
<div class=t style="left:405.90px;top:573px;letter-spacing:-0.131px;">SeAssignPrimaryTokenPrivilege</div>
<div class=t style="left:405.90px;top:588px;letter-spacing:-0.113px;">SeTcbPrivilege</div>
<div class=t style="left:405.90px;top:603px;letter-spacing:-0.236px;">SeSecurityPrivilege</div>
<div class=t style="left:405.90px;top:618px;letter-spacing:-0.170px;">SeTakeOwnershipPrivilege</div>
<div class=t style="left:405.90px;top:633px;letter-spacing:-0.220px;">SeLoadDriverPrivilege</div>
<div class=t style="left:405.90px;top:648px;letter-spacing:-0.258px;">SeBackupPrivilege</div>
<div class=t style="left:405.90px;top:663px;letter-spacing:-0.360px;">SeRestorePrivilege</div>
<div class=t style="left:405.90px;top:678px;letter-spacing:-0.231px;">SeDebugPrivilege</div>
<div class=t style="left:405.90px;top:693px;letter-spacing:-0.084px;">SeAuditPrivilege</div>
<div class=t style="left:405.90px;top:708px;letter-spacing:-0.162px;">SeSystemEnvironmentPrivilege</div>
<div class=t style="left:405.90px;top:723px;letter-spacing:-0.191px;">SeImpersonatePrivilege</div>
<div class=t style="left:405.90px;top:738px;letter-spacing:-0.297px;">SeDelegateSessionUserImpersonatePrivilege</div>
<!-- red annotation -->
<div class=a style="left:241px;top:281px;width:285px;height:33px;border:2px solid #ff0000;box-shadow:2px 3px 4px rgba(0,0,0,0.35), inset 2px 3px 4px rgba(0,0,0,0.25)"></div>


<!-- black frame -->
<div class=a style="left:0;top:0;width:1007px;height:2px;background:#000"></div>
<div class=a style="left:0;top:0;width:2px;height:768px;background:#000"></div>
<div class=a style="left:1005px;top:0;width:2px;height:768px;background:#000"></div>
<div class=a style="left:0;top:766px;width:1007px;height:2px;background:#000"></div>
</body></html>
